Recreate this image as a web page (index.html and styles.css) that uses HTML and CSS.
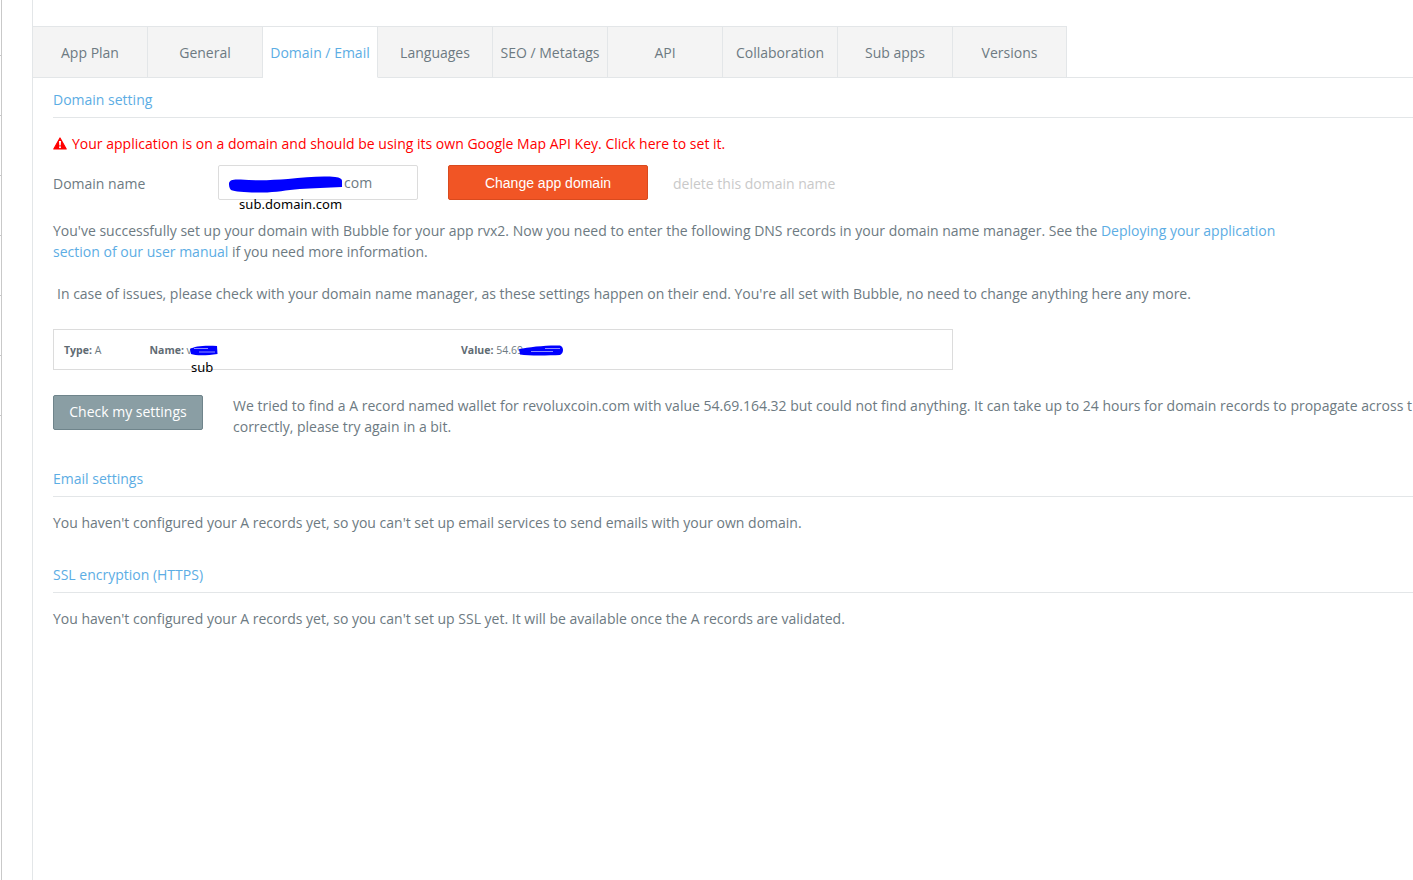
FILE: index.html
```html
<!DOCTYPE html>
<html lang="en">
<head>
<meta charset="utf-8">
<title>Domain / Email</title>
<link rel="stylesheet" href="styles.css">
</head>
<body>
<div class="page">
  <div class="rail"></div>
  <main class="panel">
    <nav class="tabs">
      <div class="tab">App Plan</div>
      <div class="tab">General</div>
      <div class="tab active">Domain / Email</div>
      <div class="tab">Languages</div>
      <div class="tab">SEO / Metatags</div>
      <div class="tab">API</div>
      <div class="tab">Collaboration</div>
      <div class="tab">Sub apps</div>
      <div class="tab">Versions</div>
    </nav>
    <div class="content">
      <h2 class="section">Domain setting</h2>
      <p class="alert">
        <svg class="warn" width="14" height="13" viewBox="0 0 14 13"><path d="M7 1 L13.2 12 H0.8 Z" fill="#f00" stroke="#f00" stroke-width="1.2" stroke-linejoin="round"/><path d="M6 4 H8 L7.7 8.6 H6.3 Z" fill="#fff"/><rect x="6.1" y="9.4" width="1.8" height="1.7" fill="#fff"/></svg>
        Your application is on a domain and should be using its own Google Map API Key. Click here to set it.
      </p>
      <div class="domain-row">
        <span class="domain-label">Domain name</span>
        <div class="domain-input">com
          <svg class="scribble" width="114" height="18" viewBox="0 0 116 18" preserveAspectRatio="none"><path d="M0 8 C1 5 4 4 12 4.500 C30 6 45 5 60 4 C78 2 95 1 108 2 C113 2.500 115 4 115 6 L115 12 C100 13 85 13 72 14 C58 15 48 17.500 34 17.500 C20 17.500 6 17 2 15 C0 13 0 10 0 8 Z" fill="#0000ff"/></svg>
          <span class="note note-domain">sub.domain.com</span>
        </div>
        <button class="btn-primary">Change app domain</button>
        <span class="delete">delete this domain name</span>
      </div>
      <p class="copy intro">You've successfully set up your domain with Bubble for your app rvx2. Now you need to enter the following DNS records in your domain name manager. See the <span class="link">Deploying your application section of our user manual</span> if you need more information.</p>
      <p class="copy issues">In case of issues, please check with your domain name manager, as these settings happen on their end. You're all set with Bubble, no need to change anything here any more.</p>
      <div class="record">
        <span class="cell cell-type"><b>Type:</b> A</span>
        <span class="cell cell-name"><b>Name:</b> v
          <svg class="scribble sc-name" width="28" height="11" viewBox="0 0 28 11"><path d="M0 4 C4 1 16 0 27 1 L27.500 9 C18 10.500 6 11 1 9 Z" fill="#0000ff"/><path d="M4 3.500 H18 M9 7 H25" stroke="#8f8fff" stroke-width="1"/></svg>
          <span class="note note-sub">sub</span>
        </span>
        <span class="cell cell-value"><b>Value:</b> 54.69
          <svg class="scribble sc-value" width="45" height="11" viewBox="0 0 45 11"><path d="M0 4 C10 2 28 0 41 0.500 C45 2 45 8 41 10 C30 10.500 10 11 1 9.500 Z" fill="#0000ff"/><path d="M12 6.500 H34 M26 3.500 H41" stroke="#8f8fff" stroke-width="1"/></svg>
        </span>
      </div>
      <div class="check-row">
        <button class="btn-check">Check my settings</button>
        <p class="copy check-text">We tried to find a A record named wallet for revoluxcoin.com with value 54.69.164.32 but could not find anything. It can take up to 24 hours for domain records to propagate across t<br>correctly, please try again in a bit.</p>
      </div>
      <h2 class="section">Email settings</h2>
      <p class="copy block">You haven't configured your A records yet, so you can't set up email services to send emails with your own domain.</p>
      <h2 class="section">SSL encryption (HTTPS)</h2>
      <p class="copy block">You haven't configured your A records yet, so you can't set up SSL yet. It will be available once the A records are validated.</p>
    </div>
  </main>
</div>
</body>
</html>
```

FILE: styles.css
```css
* { box-sizing: border-box; }
html, body { margin: 0; height: 100%; overflow: hidden; background: #fff; }
body { font-family: "Open Sans", "Noto Sans", sans-serif; font-size: 14px; color: #6d7a82; }
.page { display: flex; height: 880px; width: 1413px; overflow: hidden; }
.rail {
  width: 32px;
  flex: none;
  background:
    linear-gradient(#c9c9c9, #c9c9c9) 1px 0 / 1px 100% no-repeat,
    repeating-linear-gradient(to bottom, transparent 0 55px, #c9c9c9 55px 56px, transparent 56px 60px) 0 0 / 1px 420px no-repeat;
}
.panel { flex: none; width: 1381px; border-left: 1px solid #e3e6e8; padding-top: 26px; }
.tabs { display: flex; height: 52px; width: 1034px; border-top: 1px solid #e3e6e8; }
.tab { position: relative; z-index: 1; width: 115px; flex: none; display: flex; align-items: center; justify-content: center; background: #f4f4f4; border-right: 1px solid #e3e6e8; border-bottom: 1px solid #e3e6e8; color: #6d7a82; white-space: nowrap; padding-top: 1px; }
.tab:last-child { width: 114px; }
.tab.active { background: #fff; color: #5cade4; border-bottom-color: #fff; }
.content { margin-top: -1px; padding-left: 20px; border-top: 1px solid #e3e6e8; position: relative; }
.section { margin: 0; font-size: 14px; font-weight: 400; color: #5cade4; height: 40px; padding-top: 12px; line-height: 20px; border-bottom: 1px solid #e3e6e8; }
.alert { margin: 16px 0 0; color: #f00; line-height: 20px; display: flex; align-items: center; gap: 5px; letter-spacing: .01px; }
.warn { flex: none; margin-top: -1px; }
.domain-row { display: flex; align-items: center; margin-top: 11px; height: 35px; }
.domain-label { width: 165px; flex: none; padding-top: 2px; }
.domain-input { position: relative; width: 200px; height: 35px; flex: none; border: 1px solid #dcdcdc; border-radius: 2px; line-height: 33px; padding-left: 125px; }
.scribble { position: absolute; display: block; }
.domain-input .scribble { left: 10px; top: 9px; }
.note { position: absolute; color: #000; white-space: nowrap; font-size: 13px; line-height: 16px; font-family: "Noto Sans", "Open Sans", sans-serif; }
.note-domain { left: 20px; top: 30px; letter-spacing: .07px; }
.btn-primary { width: 200px; height: 35px; flex: none; margin-left: 30px; background: #f15525; border: 1px solid #d94a1e; border-radius: 2px; color: #fff; font: 14px "Liberation Sans", Arial, sans-serif; }
.delete { margin-left: 25px; color: #c9c9c9; padding-top: 2px; }
.copy { margin: 0; line-height: 21px; }
.intro { margin-top: 20px; width: 1240px; letter-spacing: .006px; }
.link { color: #5cade4; }
.issues { margin-top: 21px; padding-left: 4px; }
.record { position: relative; margin-top: 25px; width: 900px; height: 41px; border: 1px solid #dcdcdc; font-size: 10.5px; line-height: 40px; }
.record b { font-weight: 700; color: #5f6b73; }
.cell { position: absolute; top: 0; white-space: nowrap; }
.cell-type { left: 10px; }
.cell-name { left: 95.500px; }
.cell-value { left: 407px; }
.sc-name { left: 40px; top: 15px; }
.sc-value { left: 58px; top: 15px; }
.note-sub { left: 41.500px; top: 29px; font-size: 13px; }
.check-row { display: flex; margin-top: 25px; }
.btn-check { width: 150px; height: 35px; flex: none; background: #8a9ea4; border: 1px solid #6f848b; border-radius: 2px; color: #fff; font: 14px "Open Sans", sans-serif; padding: 0 0 2px; }
.check-text { margin-left: 30px; white-space: nowrap; }
.block { margin-top: 15px; }
.check-row + .section { margin-top: 20px; }
.block + .section { margin-top: 20px; }
```
